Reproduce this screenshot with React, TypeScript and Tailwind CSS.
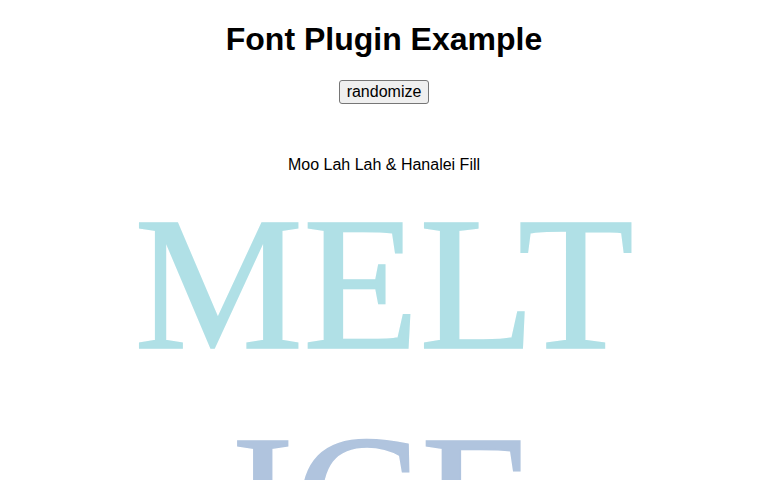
export default function App() {
  return (
    <main className="flex h-screen flex-col items-center overflow-hidden bg-white text-black font-['Liberation_Sans',Arial,sans-serif]">
      <h1 className="mt-[21px] shrink-0 text-[32px] font-bold leading-[37px]">Font Plugin Example</h1>

      <button className="mt-[22px] h-[24px] shrink-0 rounded-[3px] border border-[#767676] bg-[#efefef] px-[7px] text-[16px] leading-[18px] text-black">
        randomize
      </button>

      <p className="mt-[52px] shrink-0 text-[16px] leading-[18px]">Moo Lah Lah &amp; Hanalei Fill</p>

      <div className="mt-[1px] flex shrink-0 flex-col items-center font-['Liberation_Serif','Times_New_Roman',serif] text-[190px] leading-[218px] [-webkit-text-stroke:1.5px_currentColor]">
        <div className="text-[#b0e0e6]">MELT</div>
        <div className="text-[#b0c4de]">ICE</div>
      </div>
    </main>
  );
}
